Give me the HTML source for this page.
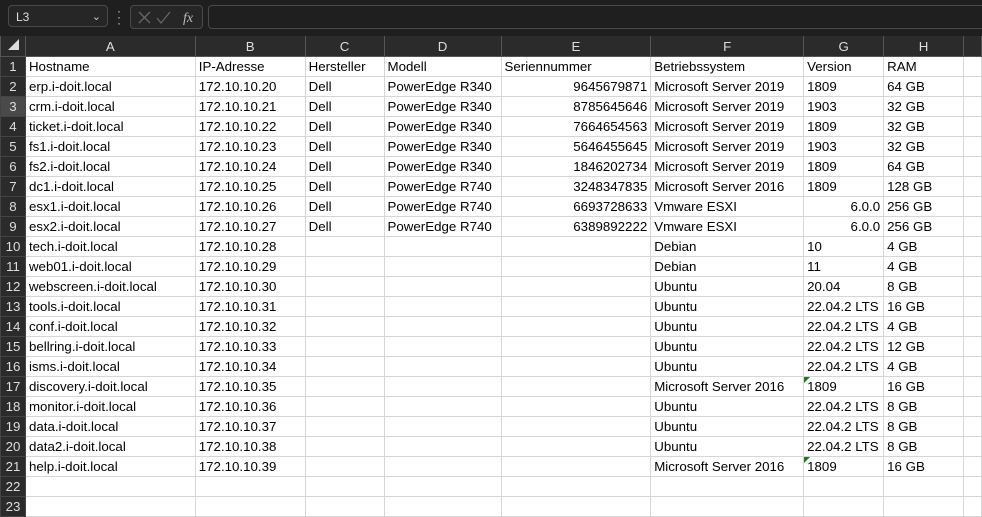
<!DOCTYPE html>
<html><head><meta charset="utf-8"><style>
body{margin:0;width:982px;height:504px;overflow:hidden;background:#1f1f1f;font-family:"Liberation Sans",sans-serif;}
.tb{position:absolute;left:0;top:0;width:982px;height:36px;background:#1f1f1f;}
.nb{position:absolute;left:8px;top:5px;width:100px;height:22px;border:1px solid #4a4a4a;border-radius:4px;background:#262626;color:#ddd;font-size:12px;line-height:22px;box-sizing:border-box;padding-left:7px;}
.nb span{position:absolute;right:6px;top:0;color:#ccc;font-size:11px;}
.dots{position:absolute;left:117px;top:8px;color:#ccc;font-size:12px;line-height:6px;}
.fx{position:absolute;left:130px;top:5px;width:73px;height:24px;border:1px solid #4a4a4a;border-radius:4px;background:#262626;box-sizing:border-box;}
.fb{position:absolute;left:208px;top:5px;width:780px;height:24px;border:1px solid #4a4a4a;border-radius:4px;background:#1f1f1f;box-sizing:border-box;}
table{position:absolute;left:0;top:36px;border-collapse:collapse;table-layout:fixed;font-size:13.3px;}
td{height:18px;padding:1px 3px 0 3px;border:1px solid #d6d6d6;background:#fff;color:#000;white-space:nowrap;overflow:hidden;line-height:18px;}
tr.h td{background:#2b2b2b;color:#ddd;text-align:center;border-color:#555;border-top:none}
td.r{background:#2b2b2b;color:#ddd;text-align:center;border-color:#444;padding:1px 0 0 0;}
td.s{background:#4a4a4a;}
.n{text-align:right}
.t{position:relative}
.t:before{content:"";position:absolute;left:0;top:0;border-top:6px solid #1e7a1e;border-right:6px solid transparent}
</style></head><body>
<div class="tb">
<div class="nb">L3<span>&#8964;</span></div>
<div class="dots">·<br>·<br>·</div>
<div class="fx"><svg width="73" height="24" style="position:absolute;left:0;top:0"><path d="M8 6l11 11M19 6L8 17" stroke="#666" stroke-width="1.3" fill="none"/><path d="M26 12l4 5 9-11" stroke="#666" stroke-width="1.3" fill="none"/><text x="52" y="16" fill="#bbb" font-family="Liberation Serif" font-style="italic" font-size="14">fx</text></svg></div>
<div class="fb"></div>
</div>
<table>
<colgroup><col style="width:25px"><col style="width:170px"><col style="width:110px"><col style="width:79px"><col style="width:117px"><col style="width:150px"><col style="width:153px"><col style="width:80px"><col style="width:80px"><col style="width:18px"></colgroup>
<tr class="h"><td class="r"><svg width="14" height="14"><path d="M2 13L13 13 13 2z" fill="#ddd"/></svg></td><td>A</td><td>B</td><td>C</td><td>D</td><td>E</td><td>F</td><td>G</td><td>H</td><td></td></tr>
<tr><td class="r">1</td><td>Hostname</td><td>IP-Adresse</td><td>Hersteller</td><td>Modell</td><td>Seriennummer</td><td>Betriebssystem</td><td>Version</td><td>RAM</td><td></td></tr>
<tr><td class="r">2</td><td>erp.i-doit.local</td><td>172.10.10.20</td><td>Dell</td><td>PowerEdge R340</td><td class="n">9645679871</td><td>Microsoft Server 2019</td><td>1809</td><td>64 GB</td><td></td></tr>
<tr><td class="r s">3</td><td>crm.i-doit.local</td><td>172.10.10.21</td><td>Dell</td><td>PowerEdge R340</td><td class="n">8785645646</td><td>Microsoft Server 2019</td><td>1903</td><td>32 GB</td><td></td></tr>
<tr><td class="r">4</td><td>ticket.i-doit.local</td><td>172.10.10.22</td><td>Dell</td><td>PowerEdge R340</td><td class="n">7664654563</td><td>Microsoft Server 2019</td><td>1809</td><td>32 GB</td><td></td></tr>
<tr><td class="r">5</td><td>fs1.i-doit.local</td><td>172.10.10.23</td><td>Dell</td><td>PowerEdge R340</td><td class="n">5646455645</td><td>Microsoft Server 2019</td><td>1903</td><td>32 GB</td><td></td></tr>
<tr><td class="r">6</td><td>fs2.i-doit.local</td><td>172.10.10.24</td><td>Dell</td><td>PowerEdge R340</td><td class="n">1846202734</td><td>Microsoft Server 2019</td><td>1809</td><td>64 GB</td><td></td></tr>
<tr><td class="r">7</td><td>dc1.i-doit.local</td><td>172.10.10.25</td><td>Dell</td><td>PowerEdge R740</td><td class="n">3248347835</td><td>Microsoft Server 2016</td><td>1809</td><td>128 GB</td><td></td></tr>
<tr><td class="r">8</td><td>esx1.i-doit.local</td><td>172.10.10.26</td><td>Dell</td><td>PowerEdge R740</td><td class="n">6693728633</td><td>Vmware ESXI</td><td class="n">6.0.0</td><td>256 GB</td><td></td></tr>
<tr><td class="r">9</td><td>esx2.i-doit.local</td><td>172.10.10.27</td><td>Dell</td><td>PowerEdge R740</td><td class="n">6389892222</td><td>Vmware ESXI</td><td class="n">6.0.0</td><td>256 GB</td><td></td></tr>
<tr><td class="r">10</td><td>tech.i-doit.local</td><td>172.10.10.28</td><td></td><td></td><td></td><td>Debian</td><td>10</td><td>4 GB</td><td></td></tr>
<tr><td class="r">11</td><td>web01.i-doit.local</td><td>172.10.10.29</td><td></td><td></td><td></td><td>Debian</td><td>11</td><td>4 GB</td><td></td></tr>
<tr><td class="r">12</td><td>webscreen.i-doit.local</td><td>172.10.10.30</td><td></td><td></td><td></td><td>Ubuntu</td><td>20.04</td><td>8 GB</td><td></td></tr>
<tr><td class="r">13</td><td>tools.i-doit.local</td><td>172.10.10.31</td><td></td><td></td><td></td><td>Ubuntu</td><td>22.04.2 LTS</td><td>16 GB</td><td></td></tr>
<tr><td class="r">14</td><td>conf.i-doit.local</td><td>172.10.10.32</td><td></td><td></td><td></td><td>Ubuntu</td><td>22.04.2 LTS</td><td>4 GB</td><td></td></tr>
<tr><td class="r">15</td><td>bellring.i-doit.local</td><td>172.10.10.33</td><td></td><td></td><td></td><td>Ubuntu</td><td>22.04.2 LTS</td><td>12 GB</td><td></td></tr>
<tr><td class="r">16</td><td>isms.i-doit.local</td><td>172.10.10.34</td><td></td><td></td><td></td><td>Ubuntu</td><td>22.04.2 LTS</td><td>4 GB</td><td></td></tr>
<tr><td class="r">17</td><td>discovery.i-doit.local</td><td>172.10.10.35</td><td></td><td></td><td></td><td>Microsoft Server 2016</td><td class="t">1809</td><td>16 GB</td><td></td></tr>
<tr><td class="r">18</td><td>monitor.i-doit.local</td><td>172.10.10.36</td><td></td><td></td><td></td><td>Ubuntu</td><td>22.04.2 LTS</td><td>8 GB</td><td></td></tr>
<tr><td class="r">19</td><td>data.i-doit.local</td><td>172.10.10.37</td><td></td><td></td><td></td><td>Ubuntu</td><td>22.04.2 LTS</td><td>8 GB</td><td></td></tr>
<tr><td class="r">20</td><td>data2.i-doit.local</td><td>172.10.10.38</td><td></td><td></td><td></td><td>Ubuntu</td><td>22.04.2 LTS</td><td>8 GB</td><td></td></tr>
<tr><td class="r">21</td><td>help.i-doit.local</td><td>172.10.10.39</td><td></td><td></td><td></td><td>Microsoft Server 2016</td><td class="t">1809</td><td>16 GB</td><td></td></tr>
<tr><td class="r">22</td><td></td><td></td><td></td><td></td><td></td><td></td><td></td><td></td><td></td></tr>
<tr><td class="r">23</td><td></td><td></td><td></td><td></td><td></td><td></td><td></td><td></td><td></td></tr>
</table>
</body></html>
